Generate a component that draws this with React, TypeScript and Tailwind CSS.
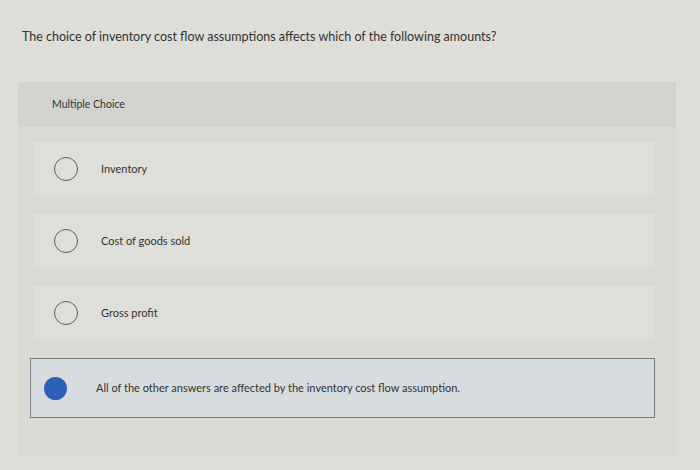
import React from 'react';

type Choice = { label: string; selected?: boolean };

const choices: Choice[] = [
  { label: 'Inventory' },
  { label: 'Cost of goods sold' },
  { label: 'Gross profit' },
  { label: 'All of the other answers are affected by the inventory cost flow assumption.', selected: true },
];

const Radio: React.FC<{ checked?: boolean }> = ({ checked }) =>
  checked ? (
    <span className="block w-[23px] h-[23px] rounded-full bg-[#2b62b6] shrink-0" />
  ) : (
    <span className="block w-[24px] h-[24px] rounded-full border-[1.3px] border-[#5e5e5e] shrink-0" />
  );

const App: React.FC = () => {
  return (
    <div className="w-[700px] h-[470px] overflow-hidden bg-[#deddd7] text-[#333] font-['Lato','Liberation_Sans',sans-serif]">
      <p className="pl-[22px] pt-[29px] text-[12.5px] leading-[16px]">
        The choice of inventory cost flow assumptions affects which of the following amounts?
      </p>

      <div className="mt-[37px] ml-[18px] mr-[24px] h-[373px] bg-[#dad9d3]">
        <div className="h-[45px] bg-[#d3d3cd] pl-[34px] flex items-center">
          <span className="text-[10.5px]">Multiple Choice</span>
        </div>

        <div className="pt-[15px] pl-[15px] pr-[21px] flex flex-col gap-[18px]">
          {choices.map((c) => (
            <div
              key={c.label}
              className={
                c.selected
                  ? 'h-[60px] -ml-[3px] flex items-center pl-[13px] gap-[29px] bg-[#d7dcdf] border border-[#767b85]'
                  : 'h-[54px] flex items-center pl-[21px] gap-[23px] bg-[#dfdfd9]'
              }
            >
              <Radio checked={c.selected} />
              <span className="text-[11px]">{c.label}</span>
            </div>
          ))}
        </div>
      </div>
    </div>
  );
};

export default App;
